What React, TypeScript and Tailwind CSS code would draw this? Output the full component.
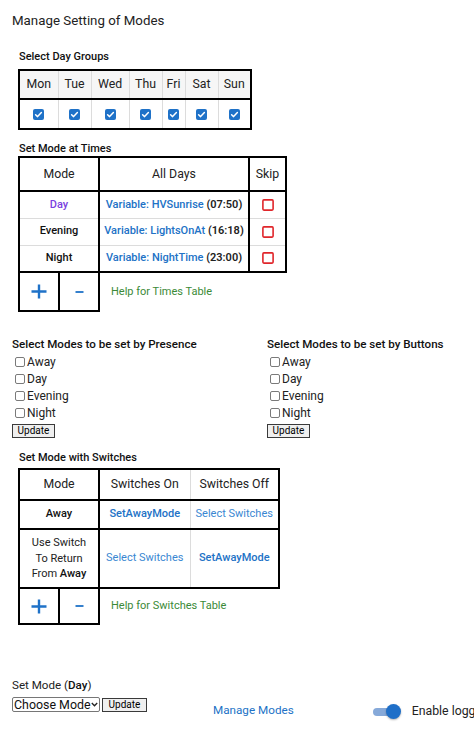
import React from "react";

function BlueCheck() {
  return (
    <svg width="11" height="11" viewBox="0 0 11 11" className="inline-block">
      <rect x="0" y="0" width="11" height="11" rx="2" fill="#1f72c8" />
      <path d="M2.6 5.7 L4.6 7.6 L8.4 3.6" stroke="#fff" strokeWidth="1.5" fill="none" strokeLinecap="round" strokeLinejoin="round" />
    </svg>
  );
}

function RedBox() {
  return (
    <svg width="12" height="12" viewBox="0 0 12 12" className="inline-block">
      <rect x="0.9" y="0.9" width="10.2" height="10.2" rx="1" fill="#fff" stroke="#e0262b" strokeWidth="1.6" />
    </svg>
  );
}

function Plus() {
  return (
    <svg width="16" height="15" viewBox="0 0 16 15" className="inline-block">
      <path d="M0.5 7.5 H15.5 M8 0.5 V14.5" stroke="#1f72c8" strokeWidth="2.4" />
    </svg>
  );
}

function Minus() {
  return (
    <svg width="9" height="4" viewBox="0 0 9 4" className="inline-block">
      <path d="M0.5 2 H8.5" stroke="#1f72c8" strokeWidth="1.8" />
    </svg>
  );
}

function Box() {
  return <span className="inline-block w-[10px] h-[10px] border border-[#7a7a7a] rounded-[2px] bg-white mr-[2px] shrink-0" />;
}

function UpdateBtn({ w }: { w: string }) {
  return (
    <div className={`${w} h-[14px] border border-[#3a3a3a] bg-[#efefef] text-[10px] leading-[12px] text-black flex items-center justify-center`}>
      Update
    </div>
  );
}

function CheckList({ title }: { title: string }) {
  return (
    <div>
      <div className="text-[11.6px] leading-[15px] font-medium text-[#111]">{title}</div>
      <div className="mt-[1px]">
        {["Away", "Day", "Evening", "Night"].map((m) => (
          <div key={m} className="h-[17px] flex items-center pl-[3px] text-[12px] text-[#222]">
            <Box />
            <span>{m}</span>
          </div>
        ))}
      </div>
      <div className="mt-[3px]">
        <UpdateBtn w="w-[43px]" />
      </div>
    </div>
  );
}

export default function App() {
  const days = [
    ["Mon", "w-[39px]"],
    ["Tue", "w-[33px]"],
    ["Wed", "w-[38px]"],
    ["Thu", "w-[33px]"],
    ["Fri", "w-[23px]"],
    ["Sat", "w-[33px]"],
    ["Sun", "w-[33px]"],
  ];
  const times = [
    ["Day", "text-[#7a3fe0]", "HVSunrise", "07:50"],
    ["Evening", "text-[#111]", "LightsOnAt", "16:18"],
    ["Night", "text-[#111]", "NightTime", "23:00"],
  ];
  return (
    <div className="w-[474px] h-[732px] overflow-hidden bg-white text-black font-[Roboto]">
      <div className="pl-[12px] pt-[12px] text-[13.3px] leading-[18px] text-[#222]">Manage Setting of Modes</div>

      {/* Day groups */}
      <div className="ml-[18px] mt-[20px]">
        <div className="pl-[1px] text-[11px] leading-[14px] font-medium text-[#111]">Select Day Groups</div>
        <table className="mt-[5px] border-collapse">
          <tbody>
            <tr className="h-[29px]">
              {days.map(([d, w], i) => (
                <td
                  key={d}
                  className={`${w} p-0 text-center text-[12.3px] font-normal bg-[#f6f6f6] text-[#222] border-t-2 border-b-2 border-t-black border-b-black ${
                    i === 0 ? "border-l-2 border-l-black" : "border-l border-l-[#dcdcdc]"
                  } ${i === 6 ? "border-r-2 border-r-black" : ""}`}
                >
                  {d}
                </td>
              ))}
            </tr>
            <tr className="h-[30px]">
              {days.map(([d], i) => (
                <td
                  key={d}
                  className={`p-0 text-center align-middle border-b-2 border-b-black ${
                    i === 0 ? "border-l-2 border-l-black" : "border-l border-l-[#dcdcdc]"
                  } ${i === 6 ? "border-r-2 border-r-black" : ""}`}
                >
                  <div className="flex justify-center">
                    <BlueCheck />
                  </div>
                </td>
              ))}
            </tr>
          </tbody>
        </table>
      </div>

      {/* Times */}
      <div className="ml-[18px] mt-[12px]">
        <div className="pl-[1px] text-[11px] leading-[14px] font-medium text-[#111]">Set Mode at Times</div>
        <table className="mt-0 border-collapse table-fixed w-[267px]">
          <colgroup>
            <col className="w-[40px]" />
            <col className="w-[40px]" />
            <col className="w-[150px]" />
            <col className="w-[37px]" />
          </colgroup>
          <tbody>
            <tr className="h-[34px] text-[12.3px] text-[#222]">
              <td colSpan={2} className="p-0 text-center border-2 border-black">Mode</td>
              <td className="p-0 text-center border-2 border-black">All Days</td>
              <td className="p-0 text-center border-2 border-black">Skip</td>
            </tr>
            {times.map(([m, c, v, t], i) => (
              <tr key={m} className="h-[27px] text-[11px]">
                <td
                  colSpan={2}
                  className={`p-0 text-center font-medium ${c} border-l-2 border-r-2 border-l-black border-r-black ${
                    i === 2 ? "border-b-2 border-b-black" : "border-b border-b-[#dcdcdc]"
                  }`}
                >
                  {m}
                </td>
                <td
                  className={`p-0 text-center whitespace-nowrap border-r-2 border-r-black ${
                    i === 2 ? "border-b-2 border-b-black" : "border-b border-b-[#dcdcdc]"
                  }`}
                >
                  <span className="text-[#2272c6] font-medium">Variable: {v}</span>{" "}
                  <span className="font-semibold text-[#222]">({t})</span>
                </td>
                <td
                  className={`p-0 text-center border-r-2 border-r-black ${
                    i === 2 ? "border-b-2 border-b-black" : "border-b border-b-[#dcdcdc]"
                  }`}
                >
                  <div className="flex justify-center">
                    <RedBox />
                  </div>
                </td>
              </tr>
            ))}
            <tr className="h-[39px]">
              <td className="p-0 border-2 border-black">
                <div className="flex justify-center items-center">
                  <Plus />
                </div>
              </td>
              <td className="p-0 border-2 border-black">
                <div className="flex justify-center items-center">
                  <Minus />
                </div>
              </td>
              <td colSpan={2} className="p-0 pl-[11px] text-[11px] text-[#3b8a37] whitespace-nowrap">
                Help for Times Table
              </td>
            </tr>
          </tbody>
        </table>
      </div>

      {/* Presence / Buttons */}
      <div className="flex mt-[25px] pl-[12px]">
        <div className="w-[255px]">
          <CheckList title="Select Modes to be set by Presence" />
        </div>
        <div>
          <CheckList title="Select Modes to be set by Buttons" />
        </div>
      </div>

      {/* Switches */}
      <div className="ml-[18px] mt-[13px]">
        <div className="pl-[1px] text-[11px] leading-[14px] font-medium text-[#111]">Set Mode with Switches</div>
        <table className="mt-[3px] border-collapse table-fixed w-[260px]">
          <colgroup>
            <col className="w-[40px]" />
            <col className="w-[40px]" />
            <col className="w-[91px]" />
            <col className="w-[89px]" />
          </colgroup>
          <tbody>
            <tr className="h-[31px] text-[12.3px] text-[#222]">
              <td colSpan={2} className="p-0 text-center border-2 border-black">Mode</td>
              <td className="p-0 text-center border-t-2 border-b-2 border-l-2 border-r border-t-black border-b-black border-l-black border-r-[#dcdcdc]">
                Switches On
              </td>
              <td className="p-0 text-center border-t-2 border-b-2 border-r-2 border-t-black border-b-black border-r-black whitespace-nowrap">
                Switches Off
              </td>
            </tr>
            <tr className="h-[29px] text-[11px]">
              <td colSpan={2} className="p-0 text-center font-medium text-[#111] border-2 border-black">Away</td>
              <td className="p-0 text-center font-medium text-[#2272c6] border-b-2 border-b-black border-r border-r-[#dcdcdc]">
                SetAwayMode
              </td>
              <td className="p-0 text-center text-[#3a87d2] whitespace-nowrap border-b-2 border-b-black border-r-2 border-r-black">
                Select Switches
              </td>
            </tr>
            <tr className="h-[59px] text-[11px]">
              <td colSpan={2} className="p-0 text-center text-[#222] leading-[15.5px] border-2 border-black">
                Use Switch
                <br />
                To Return
                <br />
                From <span className="font-medium text-[#111]">Away</span>
              </td>
              <td className="p-0 text-center text-[#3a87d2] whitespace-nowrap border-b-2 border-b-black border-r border-r-[#dcdcdc]">
                Select Switches
              </td>
              <td className="p-0 text-center font-medium text-[#2272c6] border-b-2 border-b-black border-r-2 border-r-black">
                SetAwayMode
              </td>
            </tr>
            <tr className="h-[36px]">
              <td className="p-0 border-2 border-black">
                <div className="flex justify-center items-center">
                  <Plus />
                </div>
              </td>
              <td className="p-0 border-2 border-black">
                <div className="flex justify-center items-center">
                  <Minus />
                </div>
              </td>
              <td colSpan={2} className="p-0 pl-[11px] text-[11px] text-[#3b8a37] whitespace-nowrap">
                Help for Switches Table
              </td>
            </tr>
          </tbody>
        </table>
      </div>

      {/* Bottom */}
      <div className="flex items-start pl-[12px] mt-[53px] w-[560px]">
        <div className="w-[201px] shrink-0">
          <div className="text-[11.6px] leading-[14px] text-[#222]">
            Set Mode (<span className="font-medium text-[#111]">Day</span>)
          </div>
          <div className="flex items-center mt-[5px]">
            <div className="w-[88px] h-[15px] border border-[#767676] rounded-[2px] flex items-center justify-between pl-[1px] pr-[1px] text-[12.4px] leading-[13px] text-[#111]">
              <span>Choose Mode</span>
              <svg width="7" height="5" viewBox="0 0 7 5">
                <path d="M0.8 1 L3.5 3.8 L6.2 1" stroke="#222" strokeWidth="1.3" fill="none" />
              </svg>
            </div>
            <div className="ml-[2px]">
              <UpdateBtn w="w-[45px]" />
            </div>
          </div>
        </div>
        <div className="mt-[24px] text-[11.7px] leading-[16px] text-[#2272c6] shrink-0">Manage Modes</div>
        <div className="ml-[79px] mt-[26px] relative w-[28px] h-[15px] shrink-0">
          <div className="absolute left-0 top-[4px] w-[24px] h-[8px] rounded-full bg-[#86a9d9]" />
          <div className="absolute left-[13px] top-0 w-[15px] h-[15px] rounded-full bg-[#1f6fc8] shadow-[0_1px_2px_rgba(0,0,0,0.3)]" />
        </div>
        <div className="ml-[11px] mt-[25px] text-[12.3px] leading-[16px] text-[#222] whitespace-nowrap shrink-0">Enable logging</div>
      </div>
    </div>
  );
}
